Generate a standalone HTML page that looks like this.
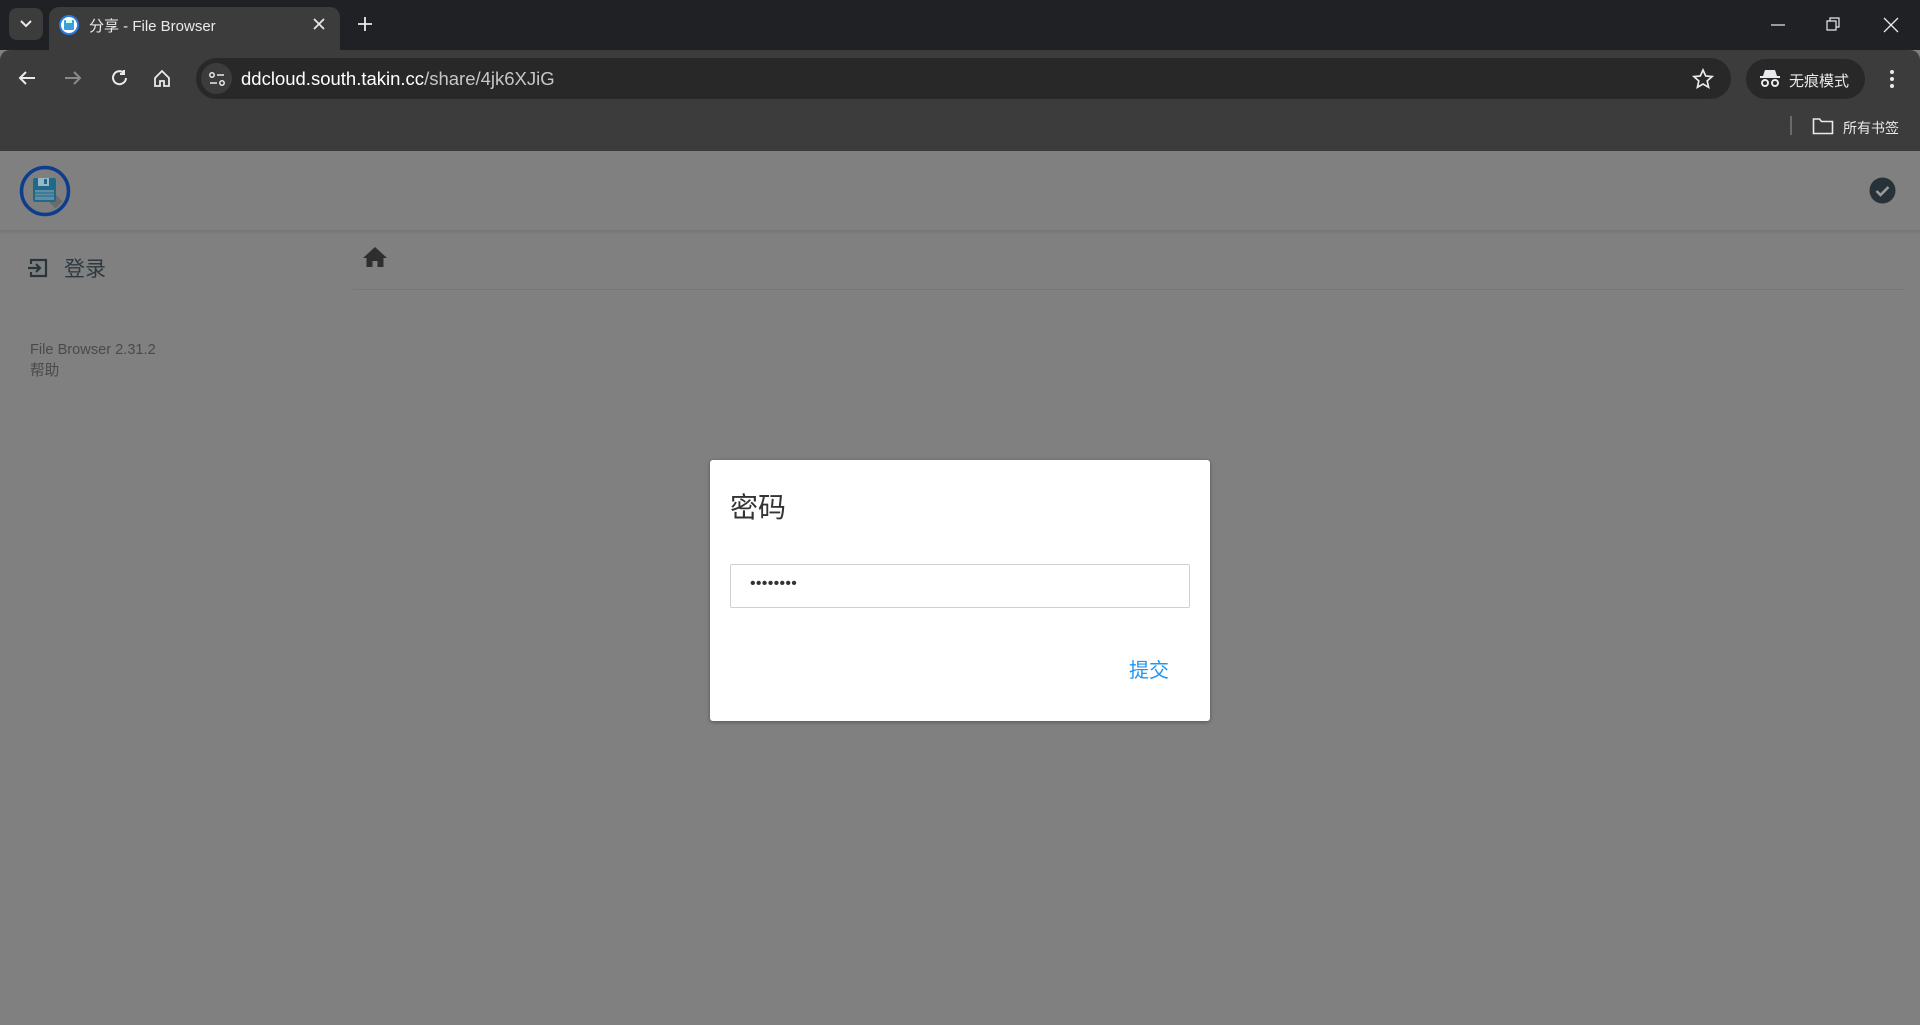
<!DOCTYPE html>
<html><head><meta charset="utf-8"><style>
*{margin:0;padding:0;box-sizing:border-box}
body{width:1920px;height:1025px;overflow:hidden;background:#808080;font-family:"Liberation Sans","Noto Sans CJK SC",sans-serif;position:relative}
.abs{position:absolute}
#tabbar{left:0;top:0;width:1920px;height:50px;background:#202124}
#toolbar{left:0;top:50px;width:1920px;height:101px;background:#3c3c3c;border-radius:10px 10px 0 0}
#tab{left:49px;top:7px;width:291px;height:44px;background:#3c3c3c;border-radius:10px 10px 0 0}
#dd{left:9px;top:8px;width:34px;height:32px;background:#3c3c3c;border-radius:8px}
#addr{left:196px;top:58px;width:1535px;height:41px;background:#282828;border-radius:21px}
#incog{left:1746px;top:59px;width:119px;height:40px;background:#282828;border-radius:20px}
.w{color:#e8eaed}
#dialog{left:710px;top:460px;width:500px;height:261px;background:#fff;border-radius:3px;box-shadow:0 1px 4px rgba(0,0,0,.35)}
</style></head><body>
<div id="tabbar" class="abs"></div>
<div id="dd" class="abs"><svg width="34" height="32"><path d="M12 13l5 5 5-5" stroke="#e8eaed" stroke-width="2" fill="none"/></svg></div>
<div id="tab" class="abs"></div>
<svg class="abs" style="left:59px;top:15px" width="20" height="20"><circle cx="10" cy="10" r="9" fill="#fff" stroke="#2a7be4" stroke-width="2"/><rect x="5" y="5" width="10" height="10" rx="1" fill="#3d9fd6"/><rect x="7" y="5" width="6" height="3" fill="#cfe"/></svg>
<div class="abs w" style="left:89px;top:15px;font-size:15px">分享 - File Browser</div>
<svg class="abs" style="left:312px;top:17px" width="14" height="14"><path d="M2 2l10 10M12 2L2 12" stroke="#e8eaed" stroke-width="1.7"/></svg>
<svg class="abs" style="left:357px;top:16px" width="16" height="16"><path d="M8 1v14M1 8h14" stroke="#e8eaed" stroke-width="1.8"/></svg>
<svg class="abs" style="left:1770px;top:17px" width="130" height="16"><path d="M1 8h14" stroke="#e8eaed" stroke-width="1.2"/><path d="M57 4h9v9h-9z M60 4V1h9v9h-3" stroke="#e8eaed" stroke-width="1.2" fill="none"/><path d="M114 1l14 14M128 1l-14 14" stroke="#e8eaed" stroke-width="1.3"/></svg>
<div id="toolbar" class="abs"></div>
<svg class="abs" style="left:17px;top:68px" width="170" height="20"><path d="M18 10H3M9 4l-6 6 6 6" stroke="#e8eaed" stroke-width="2" fill="none"/><path d="M48 10h15M57 4l6 6-6 6" stroke="#8a8a8a" stroke-width="2" fill="none"/><path d="M107 5a6.5 6.5 0 1 0 2 5M107 2v4h-4" stroke="#e8eaed" stroke-width="2" fill="none"/><path d="M138 10l7-7 7 7v8h-5v-5h-4v5h-5z" stroke="#e8eaed" stroke-width="1.8" fill="none"/></svg>
<div id="addr" class="abs"></div>
<div class="abs" style="left:201px;top:63px;width:31px;height:31px;border-radius:50%;background:#3c3c3c"></div>
<svg class="abs" style="left:207px;top:69px" width="20" height="20"><circle cx="5" cy="6" r="2.2" stroke="#e8eaed" stroke-width="1.5" fill="none"/><path d="M10 6h7M3 14h7" stroke="#e8eaed" stroke-width="1.5"/><circle cx="15" cy="14" r="2.2" stroke="#e8eaed" stroke-width="1.5" fill="none"/></svg>
<div class="abs" style="left:241px;top:68px;font-size:18.5px;color:#fff">ddcloud.south.takin.cc<span style="color:#c4c7c5">/share/4jk6XJiG</span></div>
<svg class="abs" style="left:1692px;top:68px" width="22" height="22"><path d="M11 2l2.7 6 6.3.6-4.8 4.3 1.4 6.4L11 16l-5.6 3.3 1.4-6.4L2 8.6 8.3 8z" stroke="#e8eaed" stroke-width="1.7" fill="none"/></svg>
<div id="incog" class="abs"></div>
<svg class="abs" style="left:1759px;top:68px" width="22" height="20"><path d="M6 2h10l2 6H4z" fill="#e8eaed"/><path d="M1 9h20" stroke="#e8eaed" stroke-width="2"/><circle cx="6" cy="15" r="3" stroke="#e8eaed" stroke-width="2" fill="none"/><circle cx="16" cy="15" r="3" stroke="#e8eaed" stroke-width="2" fill="none"/></svg>
<div class="abs w" style="left:1789px;top:70px;font-size:15px">无痕模式</div>
<svg class="abs" style="left:1886px;top:68px" width="12" height="22"><circle cx="6" cy="4" r="2" fill="#e8eaed"/><circle cx="6" cy="11" r="2" fill="#e8eaed"/><circle cx="6" cy="18" r="2" fill="#e8eaed"/></svg>
<div class="abs" style="left:1790px;top:116px;width:2px;height:19px;background:#6a6a6a"></div>
<svg class="abs" style="left:1812px;top:117px" width="22" height="18"><path d="M1.5 2h6l2 2.5h11v12h-19z" stroke="#e8eaed" stroke-width="1.6" fill="none"/></svg>
<div class="abs w" style="left:1843px;top:118px;font-size:14px">所有书签</div>

<div class="abs" style="left:0;top:151px;width:1920px;height:79px;background:#808080;box-shadow:0 2px 3px rgba(0,0,0,.1)"></div>
<svg class="abs" style="left:19px;top:165px" width="52" height="52"><circle cx="26" cy="26" r="23.5" fill="#7f7f7f" stroke="#0d3d8c" stroke-width="3.5"/><path d="M26 26L40 40" stroke="#6b6b6b" stroke-width="10"/><rect x="14" y="13" width="23" height="24" rx="2" fill="#1f6a8c"/><rect x="19" y="13" width="11" height="8" fill="#9ab7c4"/><rect x="25" y="14" width="3" height="5" fill="#1f6a8c"/><rect x="16" y="25" width="19" height="10" fill="#5e8ea3"/><path d="M16 28h19M16 31h19" stroke="#1f6a8c" stroke-width="1"/></svg>
<svg class="abs" style="left:1869px;top:177px" width="27" height="27"><circle cx="13.5" cy="13.5" r="13" fill="#263238"/><path d="M7.5 14l4 4 8-8" stroke="#9a9a9a" stroke-width="2.6" fill="none"/></svg>
<svg class="abs" style="left:26px;top:256px" width="24" height="24"><path d="M5 8V4h15v16H5v-4" stroke="#28363c" stroke-width="2.2" fill="none"/><path d="M2 12h12M10 8l4 4-4 4" stroke="#28363c" stroke-width="2.2" fill="none"/></svg>
<div class="abs" style="left:64px;top:253px;font-size:21px;color:#2c3a40">登录</div>
<svg class="abs" style="left:362px;top:245px" width="26" height="24"><path d="M13 2L1 13h3.5v9h6v-6h5v6h6v-9H25z" fill="#2e2e2e"/></svg>
<div class="abs" style="left:353px;top:289px;width:1551px;height:1px;background:#767676"></div>
<div class="abs" style="left:30px;top:340px;font-size:14.6px;color:#4a4a4a;line-height:21px">File Browser 2.31.2<br>帮助</div>

<div id="dialog" class="abs"></div>
<div class="abs" style="left:730px;top:486px;font-size:28px;color:#333">密码</div>
<div class="abs" style="left:730px;top:564px;width:460px;height:44px;border:1px solid #d0d0d0;border-radius:2px;background:#fff"></div>
<div class="abs" style="left:750px;top:575px;font-size:16px;color:#333;letter-spacing:0.3px">••••••••</div>
<div class="abs" style="left:1129px;top:654px;font-size:20px;color:#2196f3">提交</div>
</body></html>
